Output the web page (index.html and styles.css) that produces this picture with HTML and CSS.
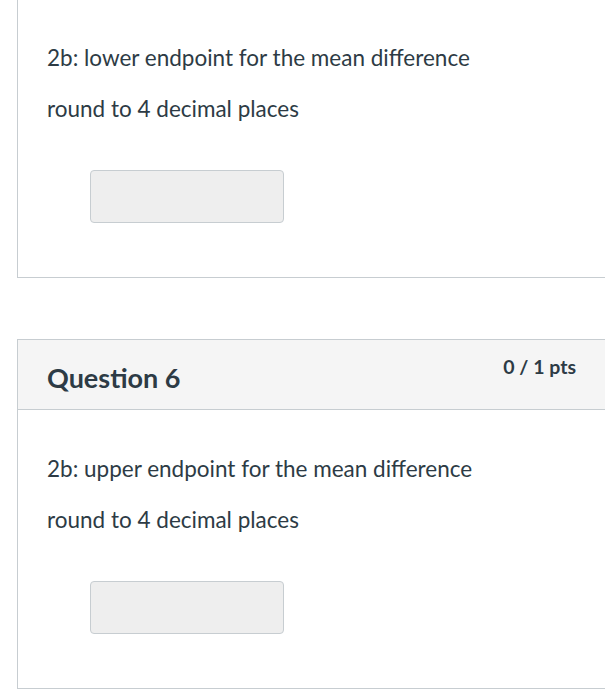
FILE: index.html
```html
<!DOCTYPE html>
<html>
<head>
<meta charset="utf-8">
<link rel="stylesheet" href="styles.css">
</head>
<body>
<div class="page">
  <section class="card card-top">
    <div class="card-body">
      <p class="text">2b: lower endpoint for the mean difference</p>
      <p class="text">round to 4 decimal places</p>
      <div class="answer"><input class="answer-input" type="text"></div>
    </div>
  </section>

  <section class="card">
    <header class="card-header">
      <h2 class="q-title">Question 6</h2>
      <span class="q-pts">0 / 1 pts</span>
    </header>
    <div class="card-body">
      <p class="text">2b: upper endpoint for the mean difference</p>
      <p class="text">round to 4 decimal places</p>
      <div class="answer"><input class="answer-input" type="text"></div>
    </div>
  </section>
</div>
</body>
</html>
```

FILE: styles.css
```css
html, body {
  margin: 0;
  padding: 0;
  background: #ffffff;
  overflow: hidden;
}

.page {
  width: 605px;
  box-sizing: border-box;
  padding-left: 17px;
  font-family: Lato, "Open Sans", sans-serif;
  color: #2d3b45;
}

.card {
  border: 1px solid #c7cdd1;
  border-right: none;
  background: #ffffff;
  margin-bottom: 61px;
}

.card:last-child {
  margin-bottom: 0;
}

.card-top {
  border-top: none;
}

.card-header {
  display: flex;
  justify-content: space-between;
  align-items: flex-start;
  background: #f5f5f5;
  border-bottom: 1px solid #c7cdd1;
  height: 69px;
  padding: 0 29px 0 29px;
}

.q-title {
  margin: 21px 0 0 0;
  font-size: 27px;
  font-weight: 700;
  line-height: 34px;
}

.q-pts {
  margin-top: 15px;
  font-size: 19.5px;
  font-weight: 700;
  line-height: 24px;
}

.card-body {
  padding: 44px 29px 54px 29px;
}

.card-top .card-body {
  padding-top: 43px;
}

.text {
  margin: 0 0 21px 0;
  font-size: 22.5px;
  line-height: 30px;
}

.answer {
  padding-top: 25px;
  padding-left: 43px;
}

.answer-input {
  display: block;
  box-sizing: border-box;
  width: 194px;
  height: 53px;
  margin: 0;
  background: #eeeeee;
  border: 1px solid #c7cdd1;
  border-radius: 4px;
}
```
